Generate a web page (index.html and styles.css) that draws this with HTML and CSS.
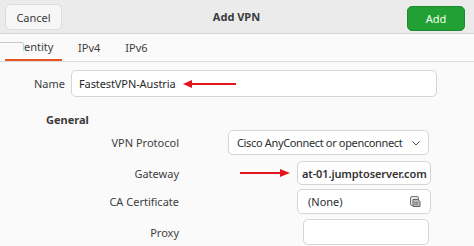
FILE: index.html
```html
<!DOCTYPE html>
<html>
<head>
<meta charset="utf-8">
<link rel="stylesheet" href="styles.css">
</head>
<body>
<div class="dialog">
  <header class="headerbar">
    <button class="btn btn-cancel">Cancel</button>
    <div class="title">Add VPN</div>
    <button class="btn btn-add">Add</button>
  </header>
  <nav class="tabs">
    <div class="tab active"><span class="tab-label">Identity</span><span class="mask"></span></div>
    <div class="tab">IPv4</div>
    <div class="tab">IPv6</div>
  </nav>
  <main class="content">
    <div class="row row-name">
      <label class="lbl lbl-name">Name</label>
      <div class="entry entry-name">FastestVPN-Austria
        <svg class="arrow arrow-left" width="54" height="10" viewBox="0 0 54 10"><line x1="7" y1="5" x2="53" y2="5" stroke="#e3161d" stroke-width="2.2"/><polygon points="0,5 9,1 9,9" fill="#e3161d"/></svg>
      </div>
    </div>
    <div class="section">General</div>
    <div class="row row-proto">
      <label class="lbl">VPN Protocol</label>
      <div class="combo">Cisco AnyConnect or openconnect
        <svg class="chev" width="8" height="5" viewBox="0 0 8 5"><polyline points="0.5,0.5 4,4 7.5,0.5" fill="none" stroke="#555" stroke-width="1"/></svg>
      </div>
    </div>
    <div class="row row-gw">
      <label class="lbl">Gateway</label>
      <svg class="arrow arrow-right" width="50" height="10" viewBox="0 0 50 10"><line x1="0" y1="5" x2="42" y2="5" stroke="#e3161d" stroke-width="2.2"/><polygon points="50,5 40,1 40,9" fill="#e3161d"/></svg>
      <div class="entry entry-gw">at-01.jumptoserver.com</div>
    </div>
    <div class="row row-ca">
      <label class="lbl">CA Certificate</label>
      <div class="entry entry-ca">(None)
        <svg class="fileicon" width="11" height="11" viewBox="0 0 11 11"><rect x="0.5" y="0.5" width="8" height="9" rx="1.5" fill="#e4e4e4" stroke="#777" stroke-width="1"/><path d="M3 3.5h5l2 2v5H3z" fill="#bbb" stroke="#666" stroke-width="1"/><path d="M4.5 6.5h3.5M4.5 8.2h3.5" stroke="#666" stroke-width="0.8"/></svg>
      </div>
    </div>
    <div class="row row-proxy">
      <label class="lbl">Proxy</label>
      <div class="entry entry-proxy"></div>
    </div>
  </main>
</div>
</body>
</html>
```
FILE: styles.css
```css
* { box-sizing: border-box; }
html, body { margin: 0; padding: 0; }
body {
  width: 474px;
  height: 246px;
  overflow: hidden;
  background: #fafafa;
  font-family: "Noto Sans", "Open Sans", sans-serif;
  font-size: 11px;
  color: #3d3d3d;
}
.dialog { width: 474px; height: 246px; display: flex; flex-direction: column; }
.headerbar {
  height: 34px;
  flex: none;
  background: #ebebeb;
  border-bottom: 1px solid #d3d3d3;
  display: flex;
  align-items: center;
  padding: 0 9px 0 5px;
}
.btn {
  font-family: inherit;
  font-size: 11px;
  border-radius: 5px;
  padding: 0;
  margin: 0;
}
.btn-cancel {
  width: 57px;
  height: 26px;
  margin-top: 1px;
  background: #f6f6f6;
  border: 1px solid #dcdcdc;
  color: #3a3a3a;
}
.title {
  flex: 1;
  text-align: center;
  font-weight: bold;
  color: #3a3a3a;
  padding-left: 4px;
}
.btn-add {
  width: 58px;
  height: 25px;
  margin-top: 3px;
  background: #22a033;
  border: 1px solid #1b8c2b;
  color: #f2fff2;
}
.tabs {
  height: 28px;
  flex: none;
  display: flex;
  align-items: stretch;
  border-bottom: 1px solid #dddddd;
  background: #fafafa;
  padding-left: 5px;
}
.tab {
  display: flex;
  align-items: center;
  color: #3d3d3d;
  margin-right: 25px;
  position: relative;
}
.tab.active {
  width: 57px;
  justify-content: center;
  margin-right: 16px;
  border-bottom: 2px solid #e95420;
}
.tab .mask {
  position: absolute;
  left: -5px;
  top: 8px;
  width: 23px;
  height: 10px;
  background: #fafafa;
  border-top: 1px solid #c8c8c8;
}
.content { flex: 1; display: flex; flex-direction: column; }
.row { display: flex; align-items: center; }
.lbl { width: 179px; text-align: right; color: #3d3d3d; flex: none; }
.row-name { margin-top: 8px; }
.lbl-name { width: 65px; }
.entry, .combo {
  background: #ffffff;
  border: 1px solid #d5d5d5;
  border-radius: 5px;
  display: flex;
  align-items: center;
  position: relative;
  color: #2e2e2e;
}
.entry-name { width: 366px; height: 27px; margin-left: 6px; padding-left: 7px; color: #2a2a2a; letter-spacing: -0.1px; }
.arrow-left { position: absolute; left: 111px; top: 8px; }
.section { font-weight: bold; margin: 15px 0 0 46px; height: 15px; line-height: 15px; color: #3a3a3a; }
.row-proto { margin-top: 3px; }
.combo { width: 201px; height: 25px; margin-left: 49px; padding-left: 8px; letter-spacing: -0.35px; }
.chev { position: absolute; right: 8px; top: 10px; }
.row-gw { margin-top: 6px; }
.arrow-right { margin-left: 61px; flex: none; }
.entry-gw { width: 134px; height: 24px; margin-left: 7px; padding-left: 4px; font-weight: 600; color: #333; letter-spacing: -0.1px; }
.row-ca { margin-top: 4px; }
.entry-ca { width: 134px; height: 25px; margin-left: 118px; padding-left: 10px; }
.fileicon { position: absolute; right: 9px; top: 6px; }
.row-proxy { margin-top: 5px; }
.entry-proxy { width: 126px; height: 26px; margin-left: 124px; }
```
